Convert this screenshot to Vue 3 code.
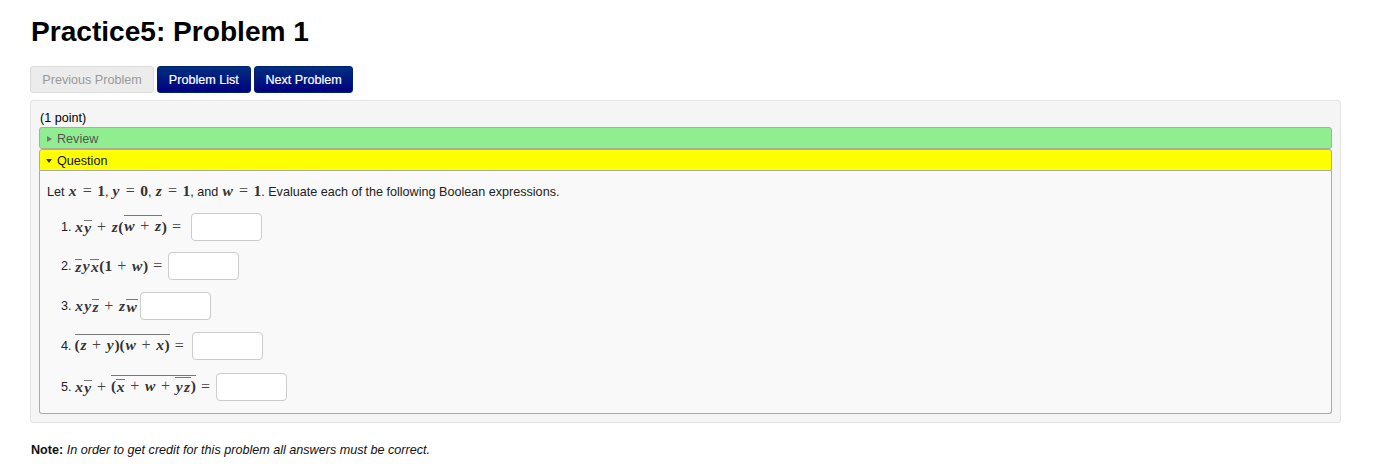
<script setup>
const buttons = [
  { label: 'Previous Problem', disabled: true },
  { label: 'Problem List', disabled: false },
  { label: 'Next Problem', disabled: false }
]
</script>

<template>
  <main class="page">
    <h1 class="title">Practice5: Problem 1</h1>
    <nav class="nav">
      <button v-for="b in buttons" :key="b.label" class="btn" :class="{ off: b.disabled }">{{ b.label }}</button>
    </nav>
    <section class="well">
      <div class="points">(1 point)</div>
      <div class="bar review"><i class="tri right"></i>Review</div>
      <div class="bar question"><i class="tri down"></i>Question</div>
      <div class="body">
        <p class="intro">Let <span class="m">x</span><span class="op">=</span><span class="mn">1</span>, <span class="m">y</span><span class="op">=</span><span class="mn">0</span>, <span class="m">z</span><span class="op">=</span><span class="mn">1</span>, and <span class="m">w</span><span class="op">=</span><span class="mn">1</span>. Evaluate each of the following Boolean expressions.</p>
        <ol class="list">
          <li class="row r1">
            <span class="num">1.</span>
            <span class="expr"><span class="m">x</span><span class="m o">y</span><span class="op">+</span><span class="m">z</span><span class="mn">(</span><span class="o big"><span class="m">w</span><span class="op">+</span><span class="m">z</span></span><span class="mn">)</span><span class="op">=</span></span>
            <input class="ans" type="text" />
          </li>
          <li class="row r2">
            <span class="num">2.</span>
            <span class="expr"><span class="m o">z</span><span class="m">y</span><span class="m o">x</span><span class="mn">(1</span><span class="op">+</span><span class="m">w</span><span class="mn">)</span><span class="op tight">=</span></span>
            <input class="ans" type="text" />
          </li>
          <li class="row r3">
            <span class="num">3.</span>
            <span class="expr"><span class="m">x</span><span class="m">y</span><span class="m o">z</span><span class="op">+</span><span class="m">z</span><span class="m o">w</span></span>
            <input class="ans" type="text" />
          </li>
          <li class="row r4">
            <span class="num">4.</span>
            <span class="expr"><span class="o big"><span class="mn">(</span><span class="m">z</span><span class="op">+</span><span class="m">y</span><span class="mn">)(</span><span class="m">w</span><span class="op">+</span><span class="m">x</span><span class="mn">)</span></span><span class="op">=</span></span>
            <input class="ans" type="text" />
          </li>
          <li class="row r5">
            <span class="num">5.</span>
            <span class="expr"><span class="m">x</span><span class="m o">y</span><span class="op">+</span><span class="o big"><span class="mn">(</span><span class="m o">x</span><span class="op">+</span><span class="m">w</span><span class="op">+</span><span class="o"><span class="m">y</span><span class="m">z</span></span><span class="mn">)</span></span><span class="op">=</span></span>
            <input class="ans" type="text" />
          </li>
        </ol>
      </div>
    </section>
    <p class="note"><b>Note:</b> <em>In order to get credit for this problem all answers must be correct.</em></p>
  </main>
</template>

<style>
html, body { margin: 0; background: #fff; }
</style>

<style scoped>
.page {
  padding: 15px 40px 0 30px;
  font-family: "Liberation Sans", Arial, sans-serif;
  font-size: 12.6px;
  color: #000;
}
.title {
  margin: 0 0 18px 1px;
  font-size: 28.1px;
  line-height: 33px;
  font-weight: 700;
}
.nav { display: flex; gap: 3px; height: 27px; margin-bottom: 7px; }
.btn {
  box-sizing: border-box;
  height: 27px;
  padding: 0 10.8px;
  border: 1px solid #00216f;
  border-radius: 3px;
  background: linear-gradient(#00307f, #00007f);
  color: #fff;
  font: 12.6px "Liberation Sans", Arial, sans-serif;
  -webkit-text-stroke: 0.2px #fff;
}
.btn.off {
  padding: 0 11.3px;
  background: #ececec;
  border-color: #dcdcdc;
  color: #999;
  -webkit-text-stroke: 0;
}
.well {
  box-sizing: border-box;
  height: 323px;
  padding: 9px 8px 8px;
  background: #f5f5f5;
  border: 1px solid #e3e3e3;
  border-radius: 3px;
}
.points { height: 17px; line-height: 16px; padding-left: 1px; }
.bar {
  box-sizing: border-box;
  height: 22px;
  padding-top: 1px;
  border: 1px solid #aaa;
  display: flex;
  align-items: center;
}
.review { background: #90ee90; border-radius: 3px; color: #555; }
.question { background: #ff0; border-radius: 3px 3px 0 0; color: #111; }
.tri { display: block; width: 0; height: 0; margin: 0 5px 0 6px; }
.tri.right { border-left: 5px solid #777; border-top: 3.5px solid transparent; border-bottom: 3.5px solid transparent; margin-right: 5px; margin-left: 7px;}
.tri.down { border-top: 4px solid #333; border-left: 3.5px solid transparent; border-right: 3.5px solid transparent; }
.body {
  box-sizing: border-box;
  height: 243px;
  background: #f9f9f9;
  border: 1px solid #aaa;
  border-top: 0;
  border-radius: 0 0 3px 3px;
  padding: 12px 7px 0;
}
.intro { margin: 0; height: 15px; line-height: 15px; color: #222; white-space: nowrap; }
.intro .m, .intro .mn, .intro .op { line-height: 15px; }
.intro .op { margin: 0 5.5px; }
.list { list-style: none; margin: 15px 0 0; padding: 0 0 0 14px; }
.row { display: flex; align-items: center; height: 28px; margin-bottom: 12px; color: #222; }
.r1 { margin-bottom: 11px; }
.r4 { margin-bottom: 13px; }
.num { margin-right: 3px; }
.expr { display: inline-flex; align-items: center; margin-right: 4px; height: 28px; }
.r1 .expr { margin-right: 5px; }
.r3 .expr { margin-right: 2px; }
.r4 .expr { margin-right: 3px; }
.r5 .expr { margin-right: 1px; }
.m { font: italic 700 15.5px "Liberation Serif", serif; color: #333; padding: 0 .7px; }
.mn { font: 700 15.5px "Liberation Serif", serif; color: #333; }
.op { font: 16px "Liberation Serif", serif; color: #444; margin: 0 5px; }
.op.tight { margin: 0 2px 0 5px; }
.o { border-top: 1px solid #777; line-height: 14px; }
.o.big { display: inline-flex; align-items: center; margin-top: -4px; padding-top: 1px; }
.ans {
  box-sizing: border-box;
  width: 71px;
  height: 28px;
  border: 1px solid #ccc;
  border-radius: 4px;
  background: #fff;
  padding: 0;
}
.note { margin: 20px 0 0 1px; line-height: 15px; color: #111; }
</style>
